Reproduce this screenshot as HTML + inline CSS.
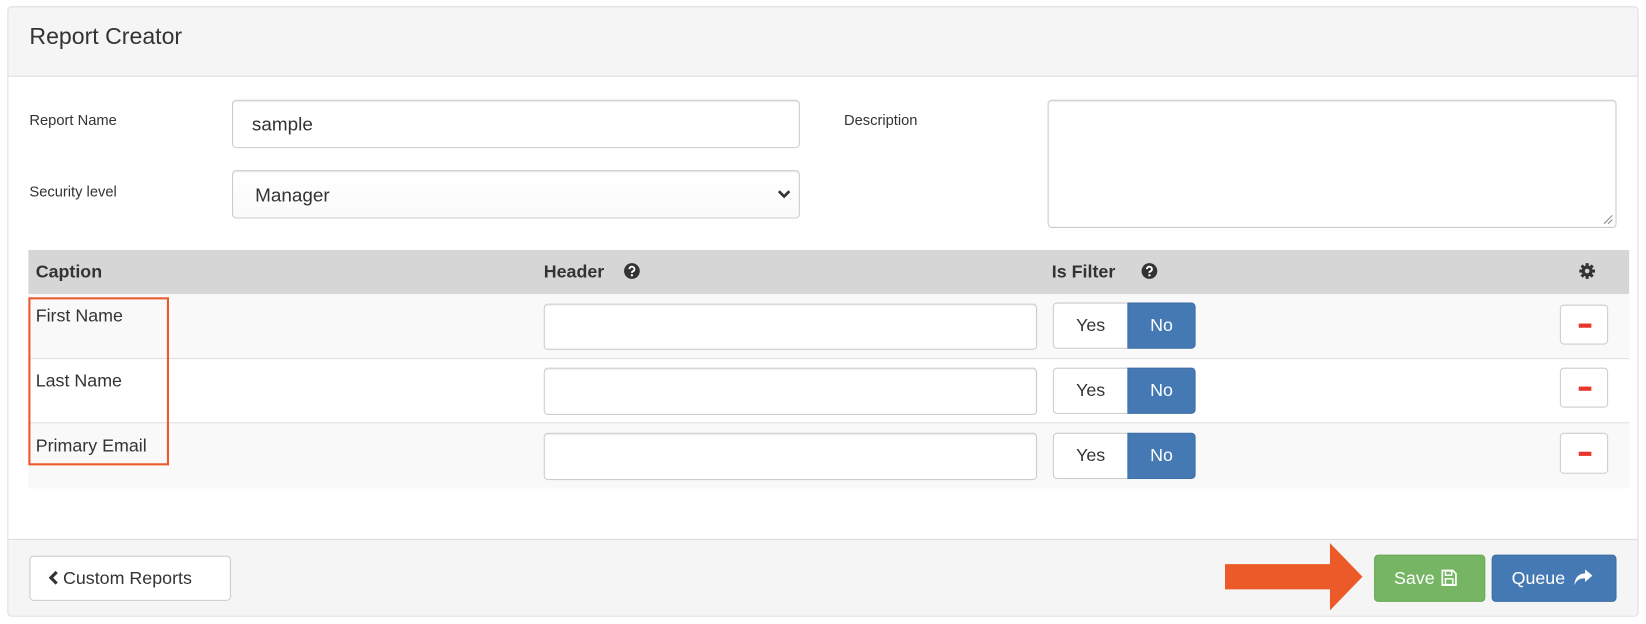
<!DOCTYPE html>
<html><head><meta charset="utf-8"><style>
html,body{margin:0;padding:0;background:#fff;width:1646px;height:624px;overflow:hidden}
#w{position:absolute;left:0;top:0;width:1568px;height:594px;transform:scale(1.0497,1.0505);transform-origin:0 0;font-family:"Liberation Sans",Arial,sans-serif;color:#333}
.a{position:absolute;box-sizing:border-box}
.inp{background:#fff;border:1px solid #ccc;border-radius:4px;box-shadow:inset 0 1px 1px rgba(0,0,0,.08)}
.lbl{font-size:14px;color:#333}
.th{font-size:17px;font-weight:bold;color:#333}
.cap{font-size:17px}
.yes{background:#fff;border:1px solid #ccc;border-radius:4px 0 0 4px;font-size:17px;text-align:center}
.no{background:#4479b4;border:1px solid #3e6ea6;border-radius:0 4px 4px 0;color:#fff;font-size:17px;text-align:center}
.min{background:#fff;border:1px solid #ccc;border-radius:4px}
.min:after{content:"";position:absolute;left:17px;top:17px;width:12px;height:4px;background:#e8352a}
</style></head><body><div id="w">
<div class="a" style="left:7px;top:6px;width:1554px;height:581px;border:1px solid #ddd;border-radius:4px;background:#fff;overflow:hidden">
 <div class="a" style="left:0;top:0;width:100%;height:66px;background:#f5f5f5;border-bottom:1px solid #ddd"></div>
 <div class="a" style="left:0;top:506px;width:100%;height:75px;background:#f5f5f5;border-top:1px solid #ddd"></div>
</div>
<div class="a" style="left:28px;top:22px;font-size:22px;color:#333">Report Creator</div>
<div class="a lbl" style="left:28px;top:106px">Report Name</div>
<div class="a inp" style="left:221px;top:95px;width:541px;height:46px;font-size:18px;padding:12px 0 0 18px">sample</div>
<div class="a lbl" style="left:28px;top:174px">Security level</div>
<div class="a inp" style="left:221px;top:162px;width:541px;height:46px;font-size:18px;padding:13px 0 0 21px;background:linear-gradient(#fff,#fafafa)">Manager</div>
<svg class="a" style="left:740px;top:180px" width="14" height="10" viewBox="0 0 14 10"><path d="M2 2l5 5 5-5" fill="none" stroke="#333" stroke-width="2.6"/></svg>
<div class="a lbl" style="left:804px;top:106px">Description</div>
<div class="a inp" style="left:998px;top:95px;width:542px;height:122px"></div>
<svg class="a" style="left:1527px;top:204px" width="10" height="10"><path d="M9 1L1 9M9 5L5 9" stroke="#888" stroke-width="1"/></svg>

<div class="a" style="left:27px;top:238px;width:1525px;height:42px;background:#d6d6d6"></div>
<div class="a th" style="left:34px;top:249px">Caption</div>
<div class="a th" style="left:518px;top:249px">Header</div>
<div class="a th" style="left:1002px;top:249px">Is Filter</div>
<svg class="a" style="left:594px;top:250px" width="16" height="16" viewBox="0 0 16 16"><circle cx="8" cy="8" r="7.5" fill="#333"/><path d="M5.6 6.2a2.4 2.3 0 1 1 3.3 2.1c-.7.3-.9.7-.9 1.4" fill="none" stroke="#fff" stroke-width="1.8"/><circle cx="8" cy="12" r="1.1" fill="#fff"/></svg>
<svg class="a" style="left:1087px;top:250px" width="16" height="16" viewBox="0 0 16 16"><circle cx="8" cy="8" r="7.5" fill="#333"/><path d="M5.6 6.2a2.4 2.3 0 1 1 3.3 2.1c-.7.3-.9.7-.9 1.4" fill="none" stroke="#fff" stroke-width="1.8"/><circle cx="8" cy="12" r="1.1" fill="#fff"/></svg>
<svg class="a" style="left:1504px;top:250px" width="16" height="16" viewBox="0 0 16 16"><g fill="#333"><circle cx="8" cy="8" r="5.2"/><rect x="6.5" y="0.5" width="3" height="15" rx=".5"/><rect x="0.5" y="6.5" width="15" height="3" rx=".5"/><rect x="6.5" y="0.5" width="3" height="15" rx=".5" transform="rotate(45 8 8)"/><rect x="6.5" y="0.5" width="3" height="15" rx=".5" transform="rotate(-45 8 8)"/></g><circle cx="8" cy="8" r="2.2" fill="#d6d6d6"/></svg>

<div class="a" style="left:27px;top:280px;width:1525px;height:62px;background:#f9f9f9;border-bottom:1px solid #ddd"></div>
<div class="a" style="left:27px;top:342px;width:1525px;height:61px;background:#fff;border-bottom:1px solid #ddd"></div>
<div class="a" style="left:27px;top:403px;width:1525px;height:62px;background:#f9f9f9"></div>

<div class="a cap" style="left:34px;top:291px">First Name</div>
<div class="a cap" style="left:34px;top:353px">Last Name</div>
<div class="a cap" style="left:34px;top:415px">Primary Email</div>
<div class="a" style="left:27px;top:283px;width:134px;height:160px;border:2px solid #ea5a2a"></div>

<div class="a inp" style="left:518px;top:289px;width:470px;height:44px"></div>
<div class="a inp" style="left:518px;top:350px;width:470px;height:45px"></div>
<div class="a inp" style="left:518px;top:412px;width:470px;height:45px"></div>

<div class="a yes" style="left:1003px;top:288px;width:72px;height:44px;line-height:42px">Yes</div>
<div class="a no" style="left:1074px;top:288px;width:65px;height:44px;line-height:42px">No</div>
<div class="a yes" style="left:1003px;top:350px;width:72px;height:44px;line-height:42px">Yes</div>
<div class="a no" style="left:1074px;top:350px;width:65px;height:44px;line-height:42px">No</div>
<div class="a yes" style="left:1003px;top:412px;width:72px;height:44px;line-height:42px">Yes</div>
<div class="a no" style="left:1074px;top:412px;width:65px;height:44px;line-height:42px">No</div>

<div class="a min" style="left:1486px;top:290px;width:46px;height:38px"></div>
<div class="a min" style="left:1486px;top:350px;width:46px;height:38px"></div>
<div class="a min" style="left:1486px;top:412px;width:46px;height:39px"></div>

<div class="a" style="left:28px;top:529px;width:192px;height:43px;background:#fff;border:1px solid #ccc;border-radius:4px;font-size:17px;line-height:41px;padding-left:17px">
<svg style="vertical-align:-1px;margin-right:3px" width="11" height="14" viewBox="0 0 11 14"><path d="M8 1.5L2.5 7 8 12.5" fill="none" stroke="#333" stroke-width="3"/></svg>Custom Reports</div>

<svg class="a" style="left:1166px;top:516px" width="134" height="66" viewBox="0 0 134 66"><path d="M1 21H101V1L132 33 101 65V45H1Z" fill="#ed5a2a"/></svg>

<div class="a" style="left:1309px;top:528px;width:106px;height:45px;background:#76b563;border:1px solid #68a855;border-radius:4px;color:#fff;font-size:17px;line-height:43px;padding-left:18px">Save
<svg style="vertical-align:-2px;margin-left:2px" width="15" height="16" viewBox="0 0 15 16"><path d="M1 1H11L14 4V15H1Z" fill="none" stroke="#fff" stroke-width="1.6"/><rect x="4" y="1.5" width="6" height="4" fill="none" stroke="#fff" stroke-width="1.4"/><rect x="4" y="9" width="7" height="5.5" fill="none" stroke="#fff" stroke-width="1.4"/></svg></div>
<div class="a" style="left:1421px;top:528px;width:119px;height:45px;background:#4479b4;border:1px solid #3e6ea6;border-radius:4px;color:#fff;font-size:17px;line-height:43px;padding-left:18px">Queue
<svg style="vertical-align:-2px;margin-left:2px" width="20" height="17" viewBox="0 0 20 17"><path d="M12 1L19 7 12 13V9.5C7 9.5 4 11 2 16 2 9 6 5 12 4.8Z" fill="#fff"/></svg></div>
</div></body></html>
